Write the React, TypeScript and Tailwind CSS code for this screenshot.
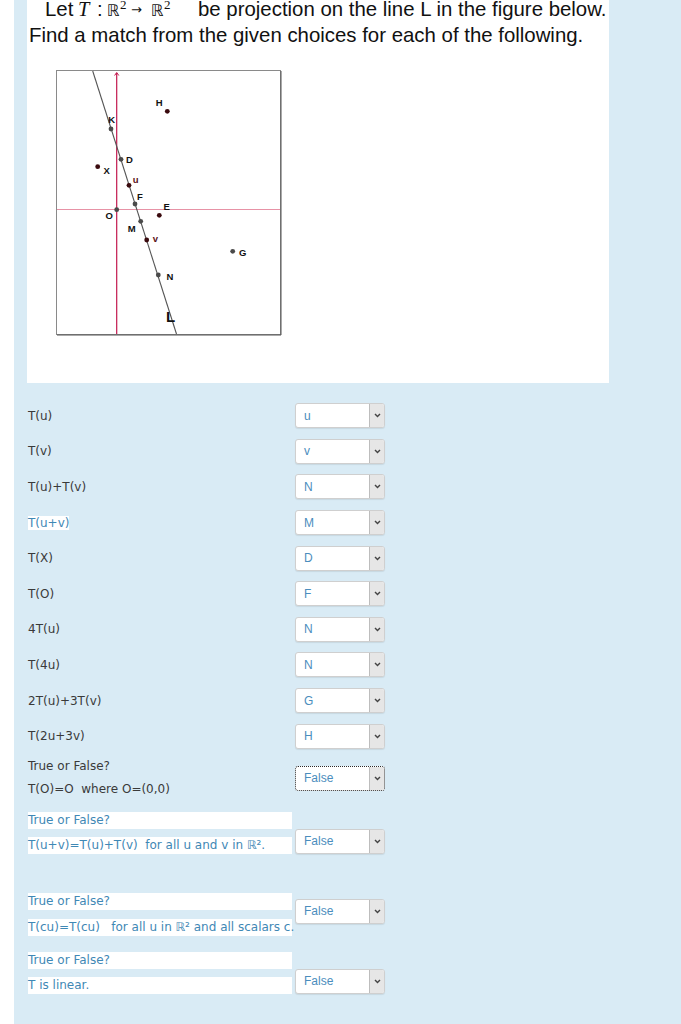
import React from "react";

type Pt = { name: string; x: number; y: number; lx: number; ly: number; dark?: boolean };

// Points on the figure, in the figure's own coordinates
const points: Pt[] = [
  { name: "H", x: 111.3, y: 41.3, lx: 103.3, ly: 32.7, dark: true },
  { name: "K", x: 55, y: 59, lx: 55.7, ly: 49 },
  { name: "D", x: 65, y: 89.3, lx: 73.5, ly: 89 },
  { name: "X", x: 41.7, y: 96.7, lx: 50.7, ly: 100, dark: true },
  { name: "u", x: 73, y: 115.3, lx: 79.7, ly: 109.3, dark: true },
  { name: "F", x: 79, y: 134, lx: 84, ly: 126 },
  { name: "O", x: 60.7, y: 139.7, lx: 53.3, ly: 145.3 },
  { name: "E", x: 103.3, y: 145.3, lx: 110.7, ly: 136.7, dark: true },
  { name: "M", x: 84.7, y: 151.3, lx: 75.7, ly: 158.3 },
  { name: "v", x: 90.7, y: 170, lx: 99.3, ly: 168.7, dark: true },
  { name: "G", x: 176.7, y: 181.3, lx: 186.7, ly: 182.7 },
  { name: "N", x: 102.3, y: 205, lx: 114, ly: 206 },
];

function Figure() {
  return (
    <svg width="226" height="266" viewBox="0 0 226 266" className="block">
      <rect x="0.5" y="0.5" width="224" height="264" fill="#fff" stroke="#8a8a8a" />
      <line x1="225" y1="1" x2="225" y2="265" stroke="#555" />
      <line x1="1" y1="265" x2="225" y2="265" stroke="#555" />
      {/* axes */}
      <line x1="1" y1="139.5" x2="224" y2="139.5" stroke="#e792a6" strokeWidth="1" />
      <line x1="60.7" y1="3" x2="60.7" y2="264" stroke="#c2184e" strokeWidth="1.2" />
      <path d="M58.6 5.5 L60.7 2.5 L62.8 5.5" fill="none" stroke="#c2184e" strokeWidth="1" />
      {/* line L */}
      <line x1="36.7" y1="1" x2="120.5" y2="264" stroke="#555" strokeWidth="1.1" />
      {points.map((p) => (
        <g key={p.name}>
          <circle cx={p.x} cy={p.y} r="2.4" fill={p.dark ? "#3a0a0e" : "#4a4a4a"} />
          <text
            x={p.lx}
            y={p.ly}
            textAnchor="middle"
            dominantBaseline="central"
            fontFamily="'Liberation Sans', Arial, sans-serif"
            fontWeight="bold"
            fontSize="9.5"
            fill={p.name === "u" || p.name === "v" ? "#5a1018" : "#111"}
          >
            {p.name}
          </text>
        </g>
      ))}
      <text
        x="114.7"
        y="246"
        textAnchor="middle"
        dominantBaseline="central"
        fontFamily="'Liberation Sans', Arial, sans-serif"
        fontWeight="bold"
        fontSize="15"
        fill="#111"
      >
        L
      </text>
    </svg>
  );
}

function Chevron() {
  return (
    <svg width="7" height="5" viewBox="0 0 7 5">
      <path d="M1 1 L3.5 3.6 L6 1" fill="none" stroke="#444" strokeWidth="1.4" />
    </svg>
  );
}

function Select({ value, focused }: { value: string; focused?: boolean }) {
  return (
    <div
      className={
        "flex w-[90px] h-[25px] shrink-0 bg-white rounded-[3px] overflow-hidden " +
        (focused
          ? "border border-dotted border-[#2a2a2a]"
          : "border border-[#cfcfcf] shadow-[0_1px_1px_rgba(0,0,0,0.08)]")
      }
    >
      <div className="flex-1 flex items-center pl-[8px] text-[12px] text-[#4b8dbd] font-['Liberation_Sans',Arial,sans-serif]">
        {value}
      </div>
      <div className="w-[15px] flex items-center justify-center bg-[#e6e6e6] border-l border-[#bdbdbd]">
        <Chevron />
      </div>
    </div>
  );
}

const rows: { label: string; value: string; hl?: boolean }[] = [
  { label: "T(u)", value: "u" },
  { label: "T(v)", value: "v" },
  { label: "T(u)+T(v)", value: "N" },
  { label: "T(u+v)", value: "M", hl: true },
  { label: "T(X)", value: "D" },
  { label: "T(O)", value: "F" },
  { label: "4T(u)", value: "N" },
  { label: "T(4u)", value: "N" },
  { label: "2T(u)+3T(v)", value: "G" },
  { label: "T(2u+3v)", value: "H" },
];

const blue = "text-[#3f88b5]";

function Box({ children, className = "" }: { children: React.ReactNode; className?: string }) {
  return (
    <div className={"w-[264px] h-[17px] bg-white leading-[17px] whitespace-nowrap " + blue + " " + className}>
      {children}
    </div>
  );
}

export default function App() {
  return (
    <div className="w-[681px] h-[1024px] bg-white pl-[14px] overflow-hidden">
      <div className="flow-root h-full bg-[#d9ebf5] pl-[13px] font-['DejaVu_Sans',Verdana,sans-serif] text-[12px] text-[#3a3a3a]">
        {/* question panel */}
        <div className="flow-root w-[582px] h-[383px] bg-white pl-[2px] font-['Liberation_Sans',Arial,sans-serif] text-[20.4px] text-[#111]">
          <div className="h-[18px] leading-[18px] pl-[16px] whitespace-nowrap flex items-baseline">
            <span className="inline-block w-[33px]">Let</span>
            <span className="inline-block w-[19px] italic font-['Liberation_Serif','Times_New_Roman',serif]">T</span>
            <span className="inline-block w-[10px]">:</span>
            <span className="inline-block w-[13px] text-[16px] font-['DejaVu_Sans',sans-serif]">ℝ</span>
            <span className="inline-block w-[11px] text-[13px] relative -top-[7px] font-['Liberation_Serif',serif]">2</span>
            <span className="inline-block w-[20px] text-[13px] relative -top-[2px] font-['DejaVu_Sans',sans-serif]">→</span>
            <span className="inline-block w-[13px] text-[16px] font-['DejaVu_Sans',sans-serif]">ℝ</span>
            <span className="inline-block w-[34px] text-[13px] relative -top-[7px] font-['Liberation_Serif',serif]">2</span>
            <span>be projection on the line L in the figure below.</span>
          </div>
          <div className="h-[26px] leading-[26px] mt-[4px] whitespace-nowrap">
            Find a match from the given choices for each of the following.
          </div>
          <div className="mt-[22px] ml-[27px]">
            <Figure />
          </div>
        </div>

        {/* matching rows */}
        <div className="pl-[1px] mt-[15px]">
          {rows.map((r) => (
            <div key={r.label} className="flex items-center h-[35.6px]">
              <div className="w-[267px]">
                <span className={r.hl ? "bg-white " + blue : ""}>{r.label}</span>
              </div>
              <Select value={r.value} />
            </div>
          ))}

          {/* true / false questions */}
          <div className="flex mt-[4px]">
            <div className="w-[267px]">
              <div className="h-[17px] leading-[17px]">True or False?</div>
              <div className="h-[17px] leading-[17px] mt-[6px] whitespace-pre">T(O)=O  where O=(0,0)</div>
            </div>
            <div className="mt-[8px]">
              <Select value="False" focused />
            </div>
          </div>

          <div className="flex mt-[14px]">
            <div className="w-[267px]">
              <Box>True or False?</Box>
              <Box className="mt-[8px] whitespace-pre">T(u+v)=T(u)+T(v)  for all u and v in ℝ².</Box>
            </div>
            <div className="mt-[17px]">
              <Select value="False" />
            </div>
          </div>

          <div className="flex mt-[39px]">
            <div className="w-[267px]">
              <Box>True or False?</Box>
              <Box className="mt-[9px] whitespace-pre">T(cu)=T(cu)   for all u in ℝ² and all scalars c.</Box>
            </div>
            <div className="mt-[6px]">
              <Select value="False" />
            </div>
          </div>

          <div className="flex mt-[16px]">
            <div className="w-[267px]">
              <Box>True or False?</Box>
              <Box className="mt-[8px]">T is linear.</Box>
            </div>
            <div className="mt-[17px]">
              <Select value="False" />
            </div>
          </div>
        </div>
      </div>
    </div>
  );
}
